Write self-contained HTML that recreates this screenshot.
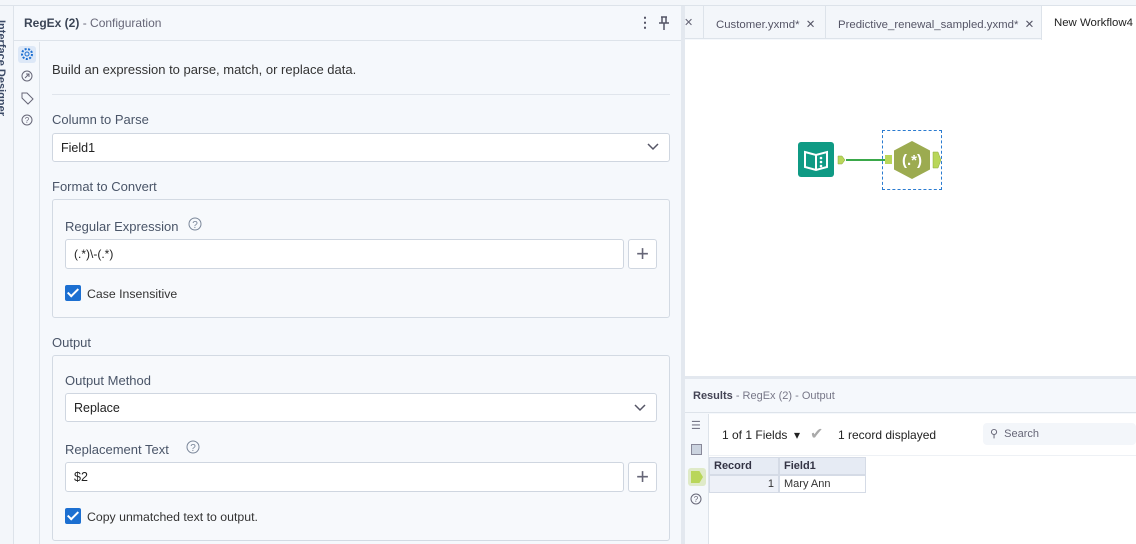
<!DOCTYPE html>
<html><head><style>
*{box-sizing:border-box;margin:0;padding:0}
body{width:1136px;height:544px;overflow:hidden;background:#f5f8fc;font-family:"Liberation Sans",sans-serif;color:#3b4556;position:relative;font-size:13px}
.a{position:absolute}
.lbl{font-size:13px;color:#4a5568}
.inp{position:absolute;background:#fff;border:1px solid #cfd6e0;border-radius:3px;font-size:12.5px;color:#222;padding-left:8px;display:flex;align-items:center}
.box{position:absolute;border:1px solid #d3dae3;border-radius:3px;background:#f7f9fc}
.plus{position:absolute;width:29px;height:30px;border:1px solid #cfd6e0;border-radius:3px;background:#fff;font-size:22px;color:#667;text-align:center;line-height:27px}
.cb{position:absolute;width:16px;height:16px;background:#1c6fd1;border-radius:2px}
.cb:after{content:"";position:absolute;left:5px;top:1px;width:4px;height:9px;border:solid #fff;border-width:0 2px 2px 0;transform:rotate(45deg)}
</style></head><body>
<div class="a" style="left:0;top:0;width:1136px;height:6px;background:#f3f6fa;border-bottom:1px solid #dde3ea"></div>
<div class="a" style="left:0;top:6px;width:14px;height:538px;background:#f3f6fa;border-right:1px solid #dde3ea;overflow:hidden"></div>
<div class="a" style="left:-5px;top:20px;width:12px;height:100px;overflow:hidden"><div style="transform:rotate(90deg);transform-origin:0 0;position:absolute;left:12px;top:0;font-size:11px;font-weight:bold;color:#3b4a66;white-space:nowrap">Interface Designer</div></div>
<!-- config header -->
<div class="a" style="left:14px;top:6px;width:668px;height:35px;background:#f5f8fc;border-bottom:1px solid #dde3ea"></div>
<div class="a" style="left:24px;top:16px;font-size:12px"><b style="color:#3b4556;font-weight:600">RegEx (2)</b> <span style="color:#667">- Configuration</span></div>
<div class="a" style="left:638px;top:14px;font-size:14px;color:#556;font-weight:bold">⋮</div>
<svg class="a" style="left:658px;top:16px" width="12" height="14"><path d="M3 1h6M4 1v6M8 1v6M1 7h10M6 7v7" stroke="#556" stroke-width="1.5" fill="none"/></svg>
<!-- icon col -->
<div class="a" style="left:14px;top:42px;width:26px;height:502px;border-right:1px solid #dde3ea"></div>
<div class="a" style="left:18px;top:46px;width:18px;height:17px;background:#dde8f7;border-radius:3px"></div>
<svg class="a" style="left:20px;top:47px" width="14" height="14"><circle cx="7" cy="7" r="5" stroke="#1c6fd1" stroke-width="2" stroke-dasharray="2 1.5" fill="none"/><circle cx="7" cy="7" r="2" stroke="#1c6fd1" fill="none"/></svg>
<svg class="a" style="left:21px;top:70px" width="12" height="12"><circle cx="6" cy="6" r="5" stroke="#667" fill="none"/><path d="M4 8l4-4M5 4h3v3" stroke="#667" fill="none"/></svg>
<svg class="a" style="left:21px;top:92px" width="13" height="13"><path d="M1 1h5l6 6-5 5-6-6z" stroke="#667" fill="none"/></svg>
<svg class="a" style="left:21px;top:114px" width="12" height="12"><circle cx="6" cy="6" r="5" stroke="#667" fill="none"/><text x="6" y="9" font-size="8" text-anchor="middle" fill="#667" font-family="Liberation Sans">?</text></svg>
<!-- content -->
<div class="a" style="left:52px;top:62px;font-size:13px;color:#333">Build an expression to parse, match, or replace data.</div>
<div class="a" style="left:52px;top:94px;width:618px;height:1px;background:#e0e5ec"></div>
<div class="a lbl" style="left:52px;top:112px">Column to Parse</div>
<div class="inp" style="left:52px;top:133px;width:618px;height:29px">Field1</div>
<svg class="a" style="left:647px;top:143px" width="12" height="8"><path d="M1 1l5 5 5-5" stroke="#556" stroke-width="1.5" fill="none"/></svg>
<div class="a lbl" style="left:52px;top:179px">Format to Convert</div>
<div class="box" style="left:52px;top:199px;width:618px;height:119px"></div>
<div class="a lbl" style="left:65px;top:219px">Regular Expression</div>
<svg class="a" style="left:188px;top:217px" width="14" height="14"><circle cx="7" cy="7" r="6" stroke="#7a8699" fill="none"/><text x="7" y="11" font-size="10" text-anchor="middle" fill="#7a8699" font-family="Liberation Sans">?</text></svg>
<div class="inp" style="left:65px;top:239px;width:559px;height:30px;font-size:12px">(.*)\-(.*)</div>
<div class="plus" style="left:628px;top:239px">+</div>
<div class="cb" style="left:65px;top:285px"></div>
<div class="a" style="left:87px;top:287px;font-size:12.3px;color:#333">Case Insensitive</div>
<div class="a lbl" style="left:52px;top:335px">Output</div>
<div class="box" style="left:52px;top:355px;width:618px;height:186px"></div>
<div class="a lbl" style="left:65px;top:373px">Output Method</div>
<div class="inp" style="left:65px;top:393px;width:592px;height:29px">Replace</div>
<svg class="a" style="left:634px;top:404px" width="12" height="8"><path d="M1 1l5 5 5-5" stroke="#556" stroke-width="1.5" fill="none"/></svg>
<div class="a lbl" style="left:65px;top:442px">Replacement Text</div>
<svg class="a" style="left:186px;top:440px" width="14" height="14"><circle cx="7" cy="7" r="6" stroke="#7a8699" fill="none"/><text x="7" y="11" font-size="10" text-anchor="middle" fill="#7a8699" font-family="Liberation Sans">?</text></svg>
<div class="inp" style="left:65px;top:462px;width:559px;height:30px">$2</div>
<div class="plus" style="left:628px;top:462px">+</div>
<div class="cb" style="left:65px;top:508px"></div>
<div class="a" style="left:87px;top:510px;font-size:12.3px;color:#333">Copy unmatched text to output.</div>
<!-- divider -->
<div class="a" style="left:681px;top:6px;width:4px;height:538px;background:#e3e8ef"></div>
<!-- tabs -->
<div class="a" style="left:685px;top:6px;width:451px;height:33px;background:#f3f6fa;border-bottom:1px solid #dde3ea"></div>
<div class="a" style="left:684px;top:16px;color:#667;font-size:11px">✕</div>
<div class="a" style="left:703px;top:6px;width:1px;height:33px;background:#dde3ea"></div>
<div class="a" style="left:716px;top:17px;font-size:11.4px;color:#556">Customer.yxmd* <span style="margin-left:3px">✕</span></div>
<div class="a" style="left:825px;top:6px;width:1px;height:33px;background:#dde3ea"></div>
<div class="a" style="left:838px;top:17px;font-size:11.4px;color:#556">Predictive_renewal_sampled.yxmd* <span style="margin-left:3px">✕</span></div>
<div class="a" style="left:1041px;top:6px;width:95px;height:34px;background:#fff;border-left:1px solid #dde3ea"></div>
<div class="a" style="left:1054px;top:17px;font-size:11.4px;color:#222;white-space:nowrap">New Workflow4</div>
<!-- canvas -->
<div class="a" style="left:685px;top:40px;width:451px;height:336px;background:#fff"></div>
<div class="a" style="left:798px;top:142px;width:36px;height:35px;background:#0f9a84;border-radius:3px"></div>
<svg class="a" style="left:802px;top:147px" width="28" height="26"><path d="M3 5l11 3 11-3v15l-11 3-11-3z" stroke="#fff" stroke-width="2" fill="none"/><path d="M14 8v15" stroke="#fff" stroke-width="2"/><circle cx="19" cy="11" r="1.3" fill="#fff"/><circle cx="19" cy="15" r="1.3" fill="#fff"/><circle cx="19" cy="19" r="1.3" fill="#fff"/></svg>
<svg class="a" style="left:837px;top:150px" width="110" height="20"><path d="M1 3h4l3 4-3 4H1z" fill="#b9d65a" stroke="#8aa83a" stroke-width=".5" transform="translate(0,3)"/><path d="M9 10h40" stroke="#3aa84a" stroke-width="2"/><rect x="48" y="5" width="7" height="9" fill="#b9d65a"/><path d="M96 2h5l3 8-3 8h-5z" fill="#b9d65a" stroke="#8aa83a" stroke-width=".5"/></svg>
<div class="a" style="left:882px;top:130px;width:60px;height:60px;border:1px dashed #2a7bd0"></div>
<svg class="a" style="left:892px;top:140px" width="40" height="40"><path d="M20 1l18 9.5v19L20 39 2 29.5v-19z" fill="#9cab50"/><text x="20" y="25" font-size="15" font-weight="bold" text-anchor="middle" fill="#fff" font-family="Liberation Sans">(.*)</text></svg>
<!-- results -->
<div class="a" style="left:685px;top:376px;width:451px;height:3px;background:#e3e8ef"></div>
<div class="a" style="left:685px;top:379px;width:451px;height:34px;background:#f5f8fc;border-bottom:1px solid #dde3ea"></div>
<div class="a" style="left:693px;top:390px;font-size:11px"><b style="color:#445;font-weight:600">Results</b> <span style="color:#778">- RegEx (2) - Output</span></div>
<div class="a" style="left:685px;top:414px;width:24px;height:130px;background:#f5f8fc;border-right:1px solid #dde3ea"></div>
<div class="a" style="left:691px;top:419px;font-size:11px;color:#778">☰</div>
<div class="a" style="left:691px;top:444px;width:11px;height:11px;background:#cbd3df;border:1px solid #889"></div>
<div class="a" style="left:688px;top:468px;width:18px;height:18px;background:#dfeac8;border-radius:3px"></div>
<div class="a" style="left:691px;top:471px;width:12px;height:12px;background:#b9d65a;clip-path:polygon(0 0,70% 0,100% 50%,70% 100%,0 100%)"></div>
<svg class="a" style="left:690px;top:493px" width="12" height="12"><circle cx="6" cy="6" r="5" stroke="#667" fill="none"/><text x="6" y="9" font-size="8" text-anchor="middle" fill="#667" font-family="Liberation Sans">?</text></svg>
<div class="a" style="left:709px;top:414px;width:427px;height:130px;background:#fff"></div>
<div class="a" style="left:709px;top:414px;width:427px;height:42px;background:#fff;border-bottom:1px solid #eef1f5"></div>
<div class="a" style="left:722px;top:428px;font-size:12px;color:#222">1 of 1 Fields &nbsp;▾</div>
<div class="a" style="left:810px;top:424px;font-size:16px;color:#aaa">✔</div>
<div class="a" style="left:838px;top:428px;font-size:12px;color:#222">1 record displayed</div>
<div class="a" style="left:983px;top:423px;width:153px;height:22px;background:#f3f6fa;border-radius:4px"></div>
<div class="a" style="left:990px;top:427px;font-size:11px;color:#667">⚲ &nbsp;Search</div>
<div class="a" style="left:709px;top:457px;width:70px;height:18px;background:#e6ebf4;border:1px solid #d5dbe6;font-size:11px;font-weight:bold;padding:2px 4px;color:#334">Record</div>
<div class="a" style="left:779px;top:457px;width:87px;height:18px;background:#e6ebf4;border:1px solid #d5dbe6;font-size:11px;font-weight:bold;padding:2px 4px;color:#334">Field1</div>
<div class="a" style="left:709px;top:475px;width:70px;height:18px;background:#eef1f8;border:1px solid #d5dbe6;font-size:11px;padding:2px 4px;text-align:right;color:#333">1</div>
<div class="a" style="left:779px;top:475px;width:87px;height:18px;background:#fff;border:1px solid #d5dbe6;font-size:11px;padding:2px 4px;color:#333">Mary Ann</div>
</body></html>
